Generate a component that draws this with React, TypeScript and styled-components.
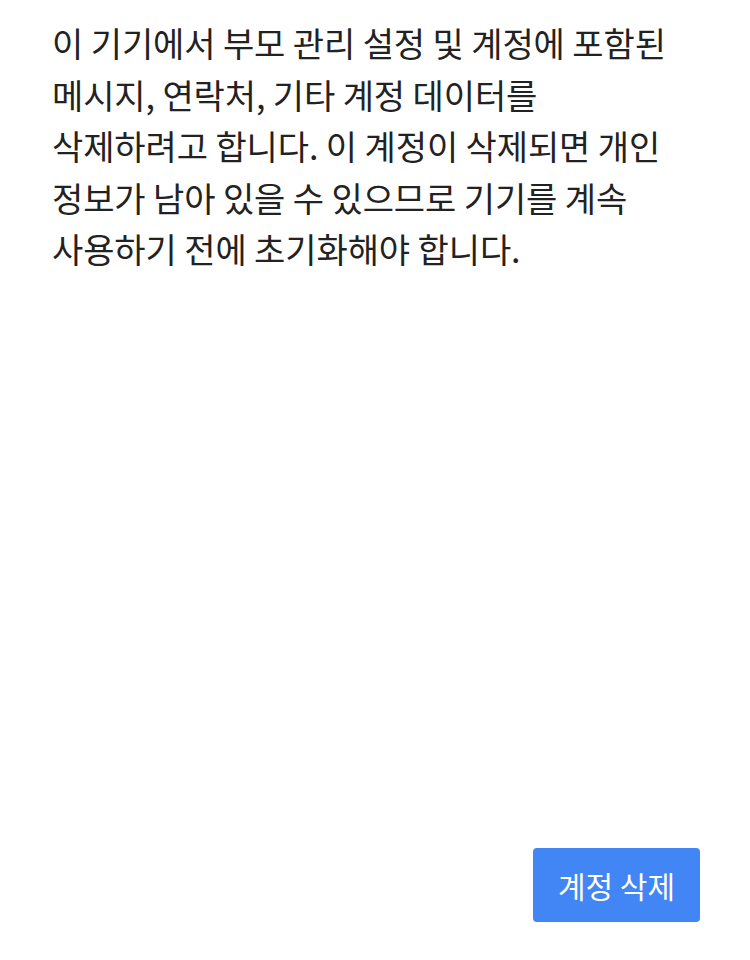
import React from "react";
import styled, { createGlobalStyle } from "styled-components";

const Global = createGlobalStyle`
  html, body { margin: 0; padding: 0; background: #ffffff; }
  body { font-family: "Noto Sans CJK KR", "Noto Sans", sans-serif; }
`;

const Screen = styled.div`
  width: 750px;
  height: 960px;
  display: flex;
  flex-direction: column;
  justify-content: space-between;
  box-sizing: border-box;
  padding: 17px 40px 38px 52px;
`;

const Message = styled.p`
  margin: 0;
  font-size: 34px;
  line-height: 51.5px;
  color: #222222;
  word-break: keep-all;
  letter-spacing: -0.1px;
`;

const Footer = styled.div`
  display: flex;
  justify-content: flex-end;
  padding-right: 10px;
`;

const DeleteButton = styled.button`
  width: 167px;
  height: 74px;
  border: none;
  border-radius: 4px;
  background: #4285f4;
  color: #ffffff;
  font-family: "Noto Sans CJK KR", "Noto Sans", sans-serif;
  font-size: 30px;
  padding: 0;
  cursor: pointer;
`;

const lines = [
  "이 기기에서 부모 관리 설정 및 계정에 포함된",
  "메시지, 연락처, 기타 계정 데이터를",
  "삭제하려고 합니다. 이 계정이 삭제되면 개인",
  "정보가 남아 있을 수 있으므로 기기를 계속",
  "사용하기 전에 초기화해야 합니다.",
];

export default function App() {
  return (
    <>
      <Global />
      <Screen>
        <Message>
          {lines.map((l, i) => (
            <React.Fragment key={i}>
              {l}
              {i < lines.length - 1 && <br />}
            </React.Fragment>
          ))}
        </Message>
        <Footer>
          <DeleteButton>계정 삭제</DeleteButton>
        </Footer>
      </Screen>
    </>
  );
}
